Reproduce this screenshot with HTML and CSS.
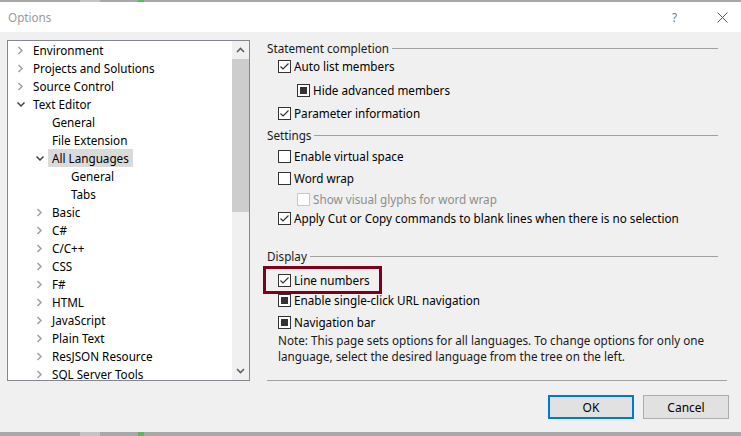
FILE: index.html
```html
<!DOCTYPE html>
<html lang="en">
  <head>
    <meta charset="UTF-8" />
    <title>Options</title>
    <link rel="stylesheet" href="styles.css">
  </head>
  <body>
    <div class="edge">
      <span class="edge_a"></span><span class="edge_b"></span><span class="edge_c"></span><span class="edge_d"></span>
    </div>
    <header class="titlebar">
      <span class="title">Options</span>
      <span class="help">?</span>
      <svg class="close" width="11" height="11" viewBox="0 0 11 11"><path d="M0.5 0.5L10.5 10.5M10.5 0.5L0.5 10.5" stroke="#555" stroke-width="1"/></svg>
    </header>

    <main class="dialog">
      <!-- 트리 -->
      <div class="tree">
        <ul class="tree_list">
          <li class="node"><i class="chev"></i>Environment</li>
          <li class="node"><i class="chev"></i>Projects and Solutions</li>
          <li class="node"><i class="chev"></i>Source Control</li>
          <li class="node"><i class="chev open"></i>Text Editor</li>
          <li class="node lv1"><i class="chev none"></i>General</li>
          <li class="node lv1"><i class="chev none"></i>File Extension</li>
          <li class="node lv1"><i class="chev open"></i><span class="sel">All Languages</span></li>
          <li class="node lv2"><i class="chev none"></i>General</li>
          <li class="node lv2"><i class="chev none"></i>Tabs</li>
          <li class="node lv1"><i class="chev"></i>Basic</li>
          <li class="node lv1"><i class="chev"></i>C#</li>
          <li class="node lv1"><i class="chev"></i>C/C++</li>
          <li class="node lv1"><i class="chev"></i>CSS</li>
          <li class="node lv1"><i class="chev"></i>F#</li>
          <li class="node lv1"><i class="chev"></i>HTML</li>
          <li class="node lv1"><i class="chev"></i>JavaScript</li>
          <li class="node lv1"><i class="chev"></i>Plain Text</li>
          <li class="node lv1"><i class="chev"></i>ResJSON Resource</li>
          <li class="node lv1 last"><i class="chev"></i>SQL Server Tools</li>
        </ul>
        <div class="scrollbar">
          <svg class="arrow" width="9" height="6" viewBox="0 0 9 6"><path d="M1 5L4.5 1.5L8 5" fill="none" stroke="#606060" stroke-width="1.6"/></svg>
          <div class="thumb"></div>
          <div class="track"></div>
          <svg class="arrow" width="9" height="6" viewBox="0 0 9 6"><path d="M1 1L4.5 4.5L8 1" fill="none" stroke="#606060" stroke-width="1.6"/></svg>
        </div>
      </div>

      <!-- 옵션 페이지 -->
      <section class="page">
        <div class="group">Statement completion<span class="rule"></span></div>
        <div class="opt"><i class="cb on"></i>Auto list members</div>
        <div class="opt sub g6"><i class="cb mixed"></i>Hide advanced members</div>
        <div class="opt g5"><i class="cb on"></i>Parameter information</div>

        <div class="group g4">Settings<span class="rule"></span></div>
        <div class="opt g3"><i class="cb"></i>Enable virtual space</div>
        <div class="opt g4"><i class="cb"></i>Word wrap</div>
        <div class="opt sub off g3"><i class="cb"></i>Show visual glyphs for word wrap</div>
        <div class="opt g1"><i class="cb on"></i>Apply Cut or Copy commands to blank lines when there is no selection</div>

        <div class="group g20">Display<span class="rule"></span></div>
        <div class="opt g6"><span class="mark"><i class="cb on"></i>Line numbers</span></div>
        <div class="opt g2"><i class="cb mixed"></i>Enable single-click URL navigation</div>
        <div class="opt g4"><i class="cb mixed"></i>Navigation bar</div>
        <p class="note">Note: This page sets options for all languages. To change options for only one language, select the desired language from the tree on the left.</p>

        <div class="sep"></div>
      </section>
    </main>

    <footer class="buttons">
      <button class="btn default">OK</button>
      <button class="btn">Cancel</button>
    </footer>

    <div class="edge bottom">
      <span class="edge_a"></span><span class="edge_b"></span><span class="edge_c"></span><span class="edge_d"></span>
    </div>
  </body>
</html>
```

FILE: styles.css
```css
* {
  box-sizing: border-box;
  margin: 0;
  padding: 0;
  list-style: none;
}
body {
  width: 741px;
  height: 436px;
  overflow: hidden;
  background-color: #f0f0f0;
  font-family: "Noto Sans", "Noto Sans CJK KR", sans-serif;
  font-size: 11.7px;
  color: #000;
}

/* 창 가장자리 */
.edge {
  display: flex;
  height: 2px;
  background-color: #a8a8a8;
}
.edge span {
  height: 100%;
}
.edge_a {
  width: 80px;
}
.edge_b {
  width: 20px;
  background-color: #c4c4c4;
}
.edge_c {
  width: 38px;
}
.edge_d {
  width: 6px;
  background-color: #5cb85c;
}
.edge.bottom {
  height: 4px;
  margin-top: 13px;
}

.titlebar {
  display: flex;
  align-items: center;
  height: 30px;
  padding-left: 8px;
  background-color: #fff;
}
.title {
  flex: 1;
  color: #9a9a9a;
}
.help {
  width: 10px;
  margin-right: 35px;
  color: #777;
}
.close {
  margin-right: 13px;
}

.dialog {
  display: flex;
  padding: 8px 14px 0 7px;
  height: 349px;
}

/* 트리 */
.tree {
  display: flex;
  width: 243px;
  height: 341px;
  border: 1px solid #828790;
  background-color: #fff;
}
.tree_list {
  flex: 1;
  overflow: hidden;
}
.node {
  display: flex;
  align-items: center;
  height: 18px;
  padding-left: 9px;
  white-space: nowrap;
}
.node.lv1 {
  padding-left: 28px;
}
.node.lv2 {
  padding-left: 47px;
}
/* 마지막 줄은 반쯤 잘려 보임 */
.node.last {
  height: 14px;
  align-items: flex-start;
  padding-top: 1px;
}
.chev {
  flex: none;
  width: 16px;
  height: 18px;
  background: url("data:image/svg+xml,%3Csvg xmlns='http://www.w3.org/2000/svg' width='16' height='18'%3E%3Cpath d='M1.5 6L5 9.5L1.5 13' fill='none' stroke='%23a0a0a0' stroke-width='1.5'/%3E%3C/svg%3E") no-repeat;
}
.node.last .chev {
  margin-top: -1px;
}
.chev.open {
  background: url("data:image/svg+xml,%3Csvg xmlns='http://www.w3.org/2000/svg' width='16' height='18'%3E%3Cpath d='M0.5 7.5L4 11L7.5 7.5' fill='none' stroke='%23404040' stroke-width='1.5'/%3E%3C/svg%3E") no-repeat;
}
.chev.none {
  background: none;
}
.sel {
  margin-left: -4px;
  padding: 0 4px;
  line-height: 18px;
  background-color: #dadada;
}
.scrollbar {
  display: flex;
  flex-direction: column;
  align-items: center;
  width: 17px;
  background-color: #f0f0f0;
}
.arrow {
  margin: 6px 0;
}
.thumb {
  width: 17px;
  height: 153px;
  background-color: #cdcdcd;
}
.track {
  flex: 1;
}

/* 옵션 페이지 */
.page {
  display: flex;
  flex-direction: column;
  flex: 1;
  margin-left: 17px;
  margin-top: -1px;
}
.group {
  display: flex;
  align-items: center;
  height: 18px;
  color: #1a1a1a;
  white-space: nowrap;
}
.rule {
  flex: 1;
  height: 1px;
  margin: 1px 9px 0 3px;
  background-color: #a0a0a0;
}
.opt {
  display: flex;
  align-items: center;
  height: 18px;
  padding-left: 11px;
  white-space: nowrap;
}
.opt.sub {
  padding-left: 30px;
}
.opt.off {
  color: #8d8d8d;
}
.g1 { margin-top: 1px; }
.g2 { margin-top: 2px; }
.g3 { margin-top: 3px; }
.g4 { margin-top: 4px; }
.g5 { margin-top: 5px; }
.g6 { margin-top: 6px; }
.g20 { margin-top: 20px; }

.cb {
  position: relative;
  flex: none;
  width: 13px;
  height: 13px;
  margin-right: 3px;
  border: 1px solid #333;
  background-color: #fff;
}
.cb.on {
  background: #fff url("data:image/svg+xml,%3Csvg xmlns='http://www.w3.org/2000/svg' width='11' height='11'%3E%3Cpath d='M1.5 5.5L4 8L9.5 2.5' fill='none' stroke='%23333' stroke-width='1.2'/%3E%3C/svg%3E") no-repeat;
}
.cb.mixed::after {
  content: "";
  position: absolute;
  inset: 2px;
  background-color: #333;
}
.opt.off .cb {
  border-color: #c8c8c8;
}
.mark {
  display: flex;
  align-items: center;
  height: 28px;
  margin-left: -15px;
  padding-left: 12px;
  padding-right: 9px;
  border: 3px solid #7d0018;
}
.note {
  margin-top: 1px;
  padding-left: 11px;
  line-height: 16px;
  color: #1a1a1a;
}
.sep {
  margin-top: auto;
  height: 1px;
  background-color: #a0a0a0;
}

/* 버튼 */
.buttons {
  display: flex;
  justify-content: flex-end;
  gap: 9px;
  padding-right: 12px;
  margin-top: 14px;
}
.btn {
  width: 86px;
  height: 24px;
  border: 1px solid #adadad;
  background-color: #e1e1e1;
  font-family: inherit;
  font-size: 12px;
  color: #000;
}
.btn.default {
  border: 2px solid #0078d7;
}
```
